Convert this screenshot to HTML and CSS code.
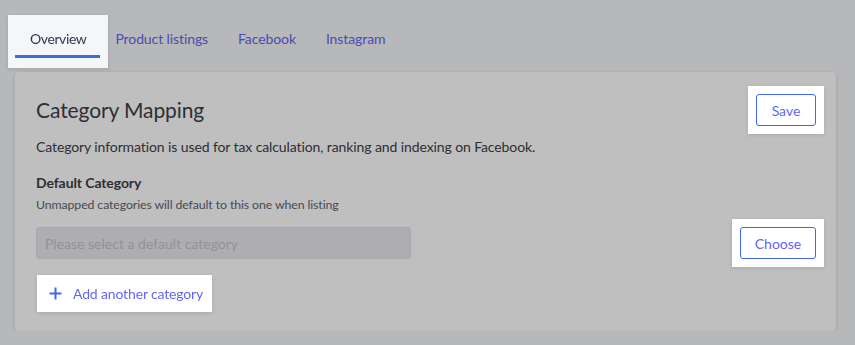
FILE: index.html
```html
<!DOCTYPE html>
<html lang="en">
<head>
<meta charset="utf-8">
<title>Category Mapping</title>
<link rel="stylesheet" href="styles.css">
</head>
<body>
<div class="page">
  <nav class="tabs">
    <span class="spotlight spotlight--tab"><a class="tab tab--active" href="#">Overview</a></span>
    <a class="tab" href="#">Product listings</a>
    <a class="tab" href="#">Facebook</a>
    <a class="tab" href="#">Instagram</a>
  </nav>

  <section class="card">
    <header class="card-head">
      <h1 class="card-title">Category Mapping</h1>
      <span class="spotlight"><button class="btn" type="button">Save</button></span>
    </header>
    <p class="card-desc">Category information is used for tax calculation, ranking and indexing on Facebook.</p>

    <h2 class="field-label">Default Category</h2>
    <p class="field-help">Unmapped categories will default to this one when listing</p>
    <div class="field-row">
      <input class="field-input" type="text" placeholder="Please select a default category" disabled>
      <span class="spotlight"><button class="btn btn--choose" type="button">Choose</button></span>
    </div>

    <div class="add-row">
      <span class="spotlight">
        <button class="link-btn" type="button">
          <svg class="plus" width="13" height="13" viewBox="0 0 13 13" aria-hidden="true"><path d="M6.5 0.5v12M0.5 6.5h12" stroke="#4066f5" stroke-width="2" fill="none"/></svg>
          <span>Add another category</span>
        </button>
      </span>
    </div>
  </section>
</div>
<div class="overlay"></div>
</body>
</html>
```

FILE: styles.css
```css
* { box-sizing: border-box; }

html, body {
  margin: 0;
  padding: 0;
  background: #f5f6f8;
  font-family: "Lato", "Liberation Sans", sans-serif;
  color: #3d4049;
  letter-spacing: -0.1px;
}

.page {
  padding: 23px 19px 0 15px;
}

/* Tabs */
.tabs {
  display: flex;
  align-items: flex-start;
}

.tab {
  display: block;
  padding: 0 15px;
  height: 35px;
  line-height: 32px;
  font-size: 14px;
  color: #6366f1;
  text-decoration: none;
  border-bottom: 3px solid transparent;
}

.tab--active {
  color: #2e3a4d;
  letter-spacing: -0.4px;
  padding: 0 14px 0 15px;
  border-bottom-color: #4169e1;
}

/* Card */
.card {
  margin-top: 14px;
  background: #fff;
  border-radius: 4px;
  box-shadow: 0 1px 4px rgba(0, 0, 0, 0.14);
  padding: 22px 20px 27px 21px;
}

.card-head {
  display: flex;
  justify-content: space-between;
  align-items: center;
}

.card-title {
  margin: 0;
  font-size: 21px;
  font-weight: 400;
  line-height: 32px;
  color: #3d4049;
}

.card-desc {
  margin: 11px 0 0;
  font-size: 14px;
  line-height: 20px;
}

.field-label {
  margin: 16px 0 0;
  font-size: 14px;
  font-weight: 700;
  line-height: 20px;
}

.field-help {
  margin: 4px 0 0;
  font-size: 12.3px;
  line-height: 16px;
  color: #5f6373;
}

.field-row {
  margin-top: 14px;
  display: flex;
  justify-content: space-between;
  align-items: center;
}

.field-input {
  width: 375px;
  height: 32px;
  padding: 0 8px;
  font: inherit;
  font-size: 14px;
  background: #e8e9ee;
  border: 1px solid #e0e1e7;
  border-radius: 3px;
}

.field-input::placeholder {
  color: #c3c4cc;
}

/* Buttons */
.btn {
  display: block;
  height: 32px;
  width: 60px;
  padding: 0;
  font: inherit;
  font-size: 14px;
  color: #6366f1;
  background: #fff;
  border: 1px solid #4066f5;
  border-radius: 3px;
}

.btn--choose {
  width: 76px;
}

.add-row {
  margin-top: 24px;
  padding-left: 9px;
  display: flex;
}

.link-btn {
  display: flex;
  align-items: center;
  gap: 11px;
  height: 21px;
  padding: 0 1px 0 4px;
  font: inherit;
  font-size: 14px;
  letter-spacing: -0.15px;
  color: #6366f1;
  background: transparent;
  border: 0;
}

.plus { display: block; }

/* Guided tour spotlight */
.overlay {
  position: fixed;
  inset: 0;
  background: rgba(0, 0, 0, 0.25);
  z-index: 10;
}

.spotlight {
  position: relative;
  z-index: 11;
  display: block;
  padding: 8px;
  margin: -8px;
  background: #fff;
  box-shadow: 0 1px 4px rgba(0, 0, 0, 0.12);
}

.spotlight--tab {
  padding: 8px 8px 10px 7px;
  margin: -8px -8px -10px -7px;
  background: #f5f6f8;
}
```
